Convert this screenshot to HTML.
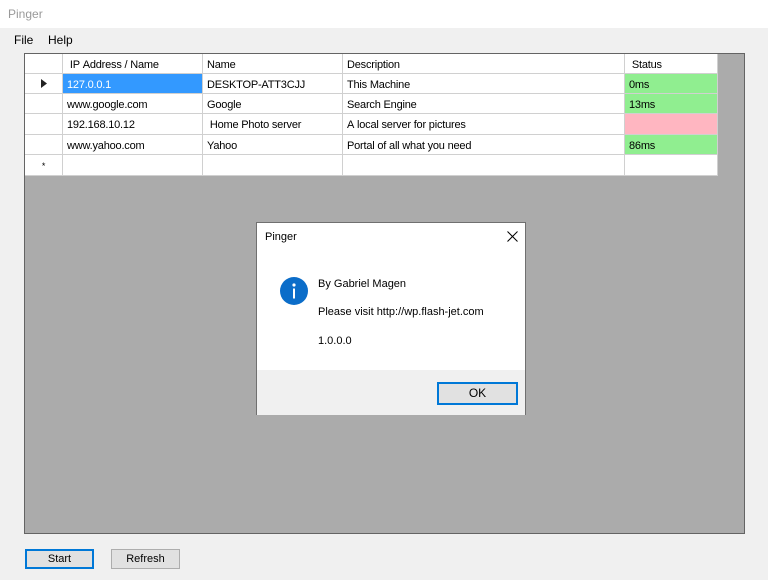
<!DOCTYPE html>
<html><head><style>
body{margin:0;width:768px;height:580px;background:#f0f0f0;font-family:"Liberation Sans",sans-serif;font-size:11px;position:relative;overflow:hidden;color:#000}
.a{position:absolute}
.cell{position:absolute;border-right:1px solid #d0d0d0;border-bottom:1px solid #d0d0d0;box-sizing:border-box;padding-left:4px;background:#fff;white-space:nowrap;letter-spacing:-0.2px}
.btn{position:absolute;background:#e1e1e1;border:1px solid #adadad;box-sizing:border-box;text-align:center;font-size:11px}
</style></head><body>
<div class="a" style="left:0;top:0;width:768px;height:28px;background:#fff"></div>
<div class="a" style="left:8px;top:7px;font-size:12px;color:#999">Pinger</div>
<div class="a" style="left:14px;top:33px;font-size:12px">File</div>
<div class="a" style="left:48px;top:33px;font-size:12px">Help</div>
<div class="a" style="left:24px;top:53px;width:721px;height:481px;background:#ababab;border:1px solid #646464;box-sizing:border-box"></div>
<div id="g"></div>
<script>
var cols=[25,63,203,343,625,718],rows=[54,74,94,114,135,155,176];
var data=[["","&nbsp;IP Address / Name","Name","Description","&nbsp;Status"],
["<svg width='6' height='9'><path d='M0 0L6 4.5L0 9Z' fill='#222'/></svg>","127.0.0.1","DESKTOP-ATT3CJJ","This Machine","0ms"],
["","www.google.com","Google","Search Engine","13ms"],
["","192.168.10.12"," Home Photo server","A local server for pictures",""],
["","www.yahoo.com","Yahoo","Portal of all what you need","86ms"],
["*","","","",""]];
var h="";
for(var r=0;r<6;r++)for(var c=0;c<5;c++){
var bg="#fff",col="#000",t=data[r][c],ex="";
if(c==0){ex="text-align:center;padding:0;font-size:9px;";}
if(r==1&&c==1){bg="#3399ff";col="#fff";}
if(c==4&&r>0&&r<5){bg=r==3?"#ffb6c1":"#90ee90";}
var hh=rows[r+1]-rows[r];
h+='<div class="cell" style="'+ex+'left:'+cols[c]+'px;top:'+rows[r]+'px;width:'+(cols[c+1]-cols[c])+'px;height:'+hh+'px;line-height:'+(hh+2)+'px;background:'+bg+';color:'+col+'">'+(t.indexOf('<')==0?t:t.replace(/ /g,"&nbsp;"))+'</div>';}
document.getElementById("g").innerHTML=h;
</script>
<div class="a" style="left:256px;top:222px;width:270px;height:193px;background:#fff;border:1px solid #707070;box-sizing:border-box">
<div class="a" style="left:8px;top:8px;font-size:11px">Pinger</div>
<svg class="a" style="left:250px;top:8px" width="11" height="11"><path d="M0.5 0.5L10.5 10.5M10.5 0.5L0.5 10.5" stroke="#000" stroke-width="1"/></svg>
<svg class="a" style="left:22px;top:53px" width="30" height="30"><circle cx="15" cy="15" r="14" fill="#0b6dc9"/><circle cx="15" cy="9" r="1.6" fill="#fff"/><rect x="14" y="12.5" width="2" height="10" fill="#fff"/></svg>
<div class="a" style="left:61px;top:55px">By Gabriel Magen</div>
<div class="a" style="left:61px;top:83px">Please visit http://wp.flash-jet.com</div>
<div class="a" style="left:61px;top:112px">1.0.0.0</div>
<div class="a" style="left:0;top:147px;width:268px;height:45px;background:#f0f0f0"></div>
<div class="btn" style="left:180px;top:159px;width:81px;height:23px;border:2px solid #0078d7;line-height:19px;font-size:12px">OK</div>
</div>
<div class="btn" style="left:25px;top:549px;width:69px;height:20px;border:2px solid #0078d7;line-height:16px">Start</div>
<div class="btn" style="left:111px;top:549px;width:69px;height:20px;line-height:18px">Refresh</div>
</body></html>
